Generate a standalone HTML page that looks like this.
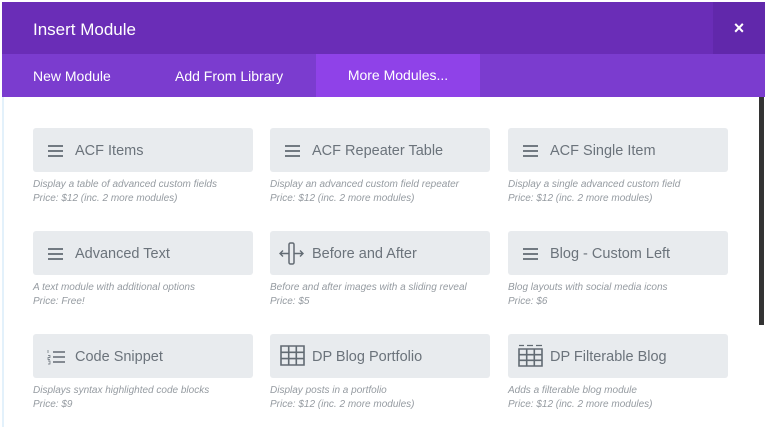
<!DOCTYPE html><html><head><style>
body{margin:0;width:768px;height:427px;background:#fff;font-family:"Liberation Sans",sans-serif;overflow:hidden;position:relative}
.hd{position:absolute;left:2px;top:2px;width:763px;height:52px;background:#6a2db7}
.hd span{position:absolute;left:31px;top:18px;color:#fff;font-size:17px}
.cl{position:absolute;left:711px;top:0;width:52px;height:52px;background:#6128ab;color:#fff;font-size:18px;text-align:center;line-height:52px;font-weight:bold}
.tb{position:absolute;left:2px;top:54px;width:763px;height:43px;background:#7b3ccf}
.tb div{position:absolute;top:1px;height:43px;line-height:43px;color:#fff;font-size:14px}
.act{background:#8f42e8;left:314px;width:164px;text-align:center;top:0!important}
.bd{position:absolute;left:2px;top:97px;width:763px;height:330px;border-left:2px solid #e3f1fb}
.sb{position:absolute;left:759px;top:97px;width:5px;height:228px;background:#333}
.c{position:absolute;width:220px;height:44px;background:#e8ebee;border-radius:3px}
.c span{position:absolute;left:42px;top:15px;font-size:14.5px;color:#6b737b}
.c svg{position:absolute;left:13px;top:11px}
.d{position:absolute;font-size:10px;font-style:italic;color:#959ba1;line-height:14px}
</style></head><body>
<div class="hd"><span>Insert Module</span><div class="cl">×</div></div>
<div class="tb"><div style="left:31px">New Module</div><div style="left:173px">Add From Library</div><div class="act">More Modules...</div></div>
<div class="bd"></div><div class="sb"></div>

<div class="c" style="left:33px;top:128px"><svg width="24" height="24"><path d="M2 7h15M2 12h15M2 17h15" stroke="#626b73" stroke-width="1.8"/></svg><span>ACF Items</span></div>
<div class="d" style="left:33px;top:178px">Display a table of advanced custom fields<br>Price: $12 (inc. 2 more modules)</div>
<div class="c" style="left:270px;top:128px"><svg width="24" height="24"><path d="M2 7h15M2 12h15M2 17h15" stroke="#626b73" stroke-width="1.8"/></svg><span>ACF Repeater Table</span></div>
<div class="d" style="left:270px;top:178px">Display an advanced custom field repeater<br>Price: $12 (inc. 2 more modules)</div>
<div class="c" style="left:508px;top:128px"><svg width="24" height="24"><path d="M2 7h15M2 12h15M2 17h15" stroke="#626b73" stroke-width="1.8"/></svg><span>ACF Single Item</span></div>
<div class="d" style="left:508px;top:178px">Display a single advanced custom field<br>Price: $12 (inc. 2 more modules)</div>

<div class="c" style="left:33px;top:231px"><svg width="24" height="24"><path d="M2 7h15M2 12h15M2 17h15" stroke="#626b73" stroke-width="1.8"/></svg><span>Advanced Text</span></div>
<div class="d" style="left:33px;top:281px">A text module with additional options<br>Price: Free!</div>
<div class="c" style="left:270px;top:231px"><svg width="28" height="26" style="left:9px;top:10px"><rect x="10" y="2" width="5" height="21" rx="1.5" fill="none" stroke="#626b73" stroke-width="1.5"/><path d="M1 12.5h9M15 12.5h9M4 9.5l-3 3 3 3M21 9.5l3 3-3 3" fill="none" stroke="#626b73" stroke-width="1.4"/></svg><span>Before and After</span></div>
<div class="d" style="left:270px;top:281px">Before and after images with a sliding reveal<br>Price: $5</div>
<div class="c" style="left:508px;top:231px"><svg width="24" height="24"><path d="M2 7h15M2 12h15M2 17h15" stroke="#626b73" stroke-width="1.8"/></svg><span>Blog - Custom Left</span></div>
<div class="d" style="left:508px;top:281px">Blog layouts with social media icons<br>Price: $6</div>

<div class="c" style="left:33px;top:334px"><svg width="24" height="24"><path d="M7 7h12M7 12h12M7 17h12" stroke="#626b73" stroke-width="1.6"/><path d="M2 5v3M2 10.5h2v2h-2v2h2M2 16h2v3h-2" stroke="#626b73" stroke-width=".7" fill="none"/></svg><span>Code Snippet</span></div>
<div class="d" style="left:33px;top:384px">Displays syntax highlighted code blocks<br>Price: $9</div>
<div class="c" style="left:270px;top:334px"><svg width="26" height="24" style="left:10px;top:11px"><path d="M1 1h23v19H1zM1 7.3h23M1 13.6h23M8.7 1v19M16.3 1v19" fill="none" stroke="#626b73" stroke-width="1.6"/></svg><span>DP Blog Portfolio</span></div>
<div class="d" style="left:270px;top:384px">Display posts in a portfolio<br>Price: $12 (inc. 2 more modules)</div>
<div class="c" style="left:508px;top:334px"><svg width="26" height="26" style="left:10px;top:10px"><path d="M1 1.5h5M9 1.5h6M18 1.5h6" stroke="#626b73" stroke-width="1.3"/><path d="M1 5h23v17H1zM1 10.7h23M1 16.3h23M8.7 5v17M16.3 5v17" fill="none" stroke="#626b73" stroke-width="1.6"/></svg><span>DP Filterable Blog</span></div>
<div class="d" style="left:508px;top:384px">Adds a filterable blog module<br>Price: $12 (inc. 2 more modules)</div>
</body></html>
